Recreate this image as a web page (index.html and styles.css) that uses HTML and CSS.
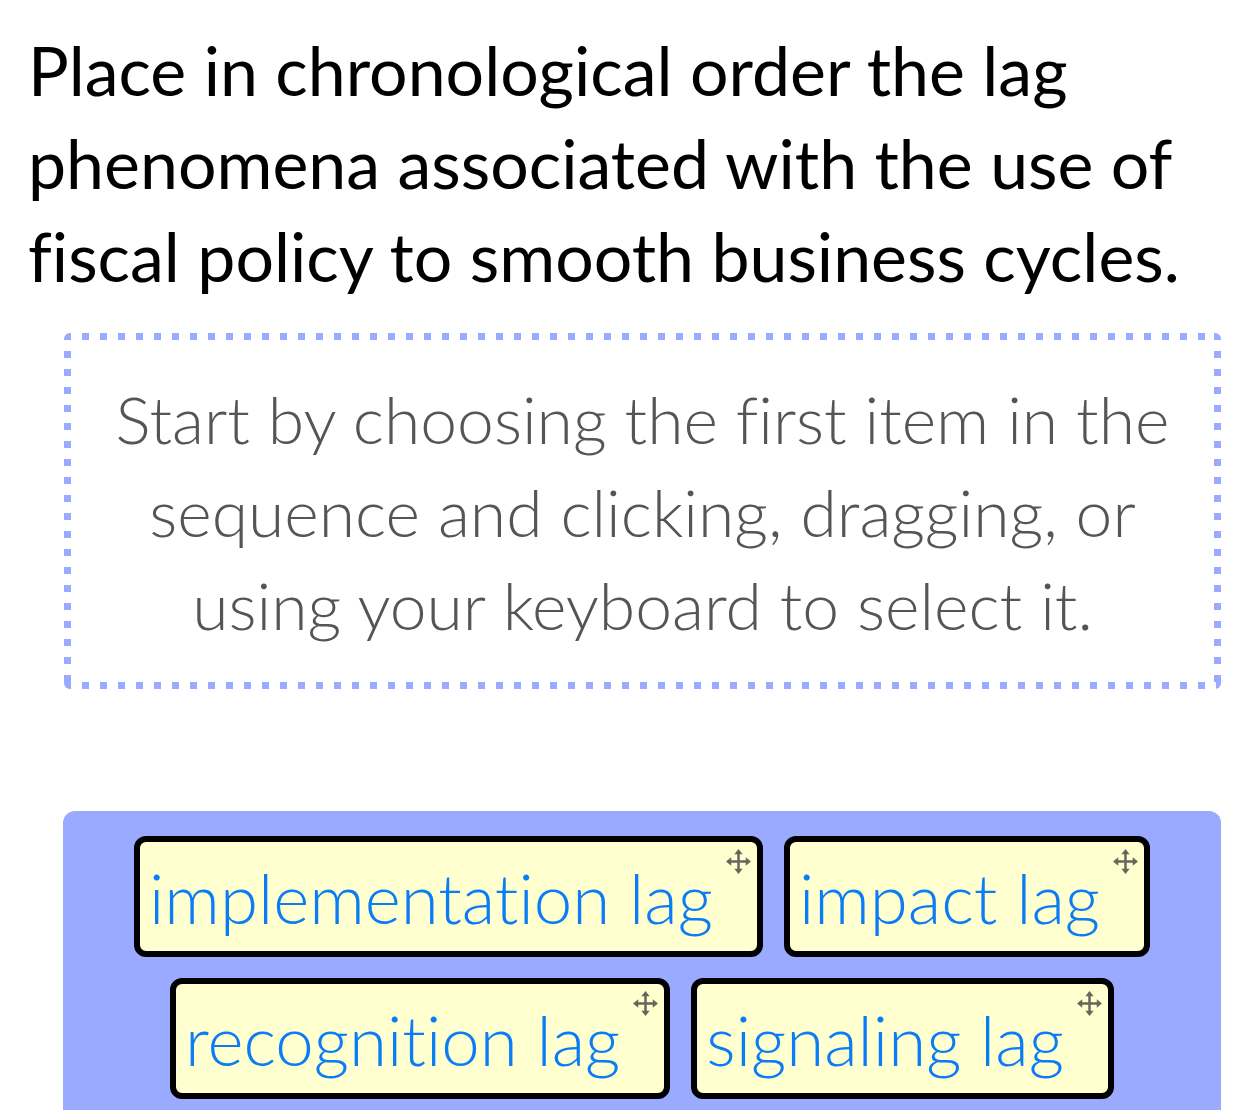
FILE: index.html
```html
<!DOCTYPE html>
<html lang="en">
<head>
    <meta charset="UTF-8">
    <meta name="viewport" content="width=device-width, initial-scale=1.0">
    <title>Sequencing Question</title>
    <link rel="stylesheet" href="styles.css">
</head>
<body>
    <div class="question">
        <p class="prompt">Place in chronological order the lag phenomena associated with the use of fiscal policy to smooth business cycles.</p>

        <div class="drop-zone">
            <p>Start by choosing the first item in the sequence and clicking, dragging, or using your keyboard to select it.</p>
        </div>

        <div class="tray">
            <div class="tile">
                <span class="tile-label">implementation lag</span>
                <svg class="grip" viewBox="0 0 26 26"><path d="M13 1l-4 5h2.8v5.8H6V9l-5 4 5 4v-2.8h5.8V20H9l4 5 4-5h-2.8v-5.8H20V17l5-4-5-4v2.8h-5.8V6H17z"/></svg>
            </div>
            <div class="tile">
                <span class="tile-label">impact lag</span>
                <svg class="grip" viewBox="0 0 26 26"><path d="M13 1l-4 5h2.8v5.8H6V9l-5 4 5 4v-2.8h5.8V20H9l4 5 4-5h-2.8v-5.8H20V17l5-4-5-4v2.8h-5.8V6H17z"/></svg>
            </div>
            <div class="tile">
                <span class="tile-label">recognition lag</span>
                <svg class="grip" viewBox="0 0 26 26"><path d="M13 1l-4 5h2.8v5.8H6V9l-5 4 5 4v-2.8h5.8V20H9l4 5 4-5h-2.8v-5.8H20V17l5-4-5-4v2.8h-5.8V6H17z"/></svg>
            </div>
            <div class="tile">
                <span class="tile-label">signaling lag</span>
                <svg class="grip" viewBox="0 0 26 26"><path d="M13 1l-4 5h2.8v5.8H6V9l-5 4 5 4v-2.8h5.8V20H9l4 5 4-5h-2.8v-5.8H20V17l5-4-5-4v2.8h-5.8V6H17z"/></svg>
            </div>
        </div>
    </div>
</body>
</html>
```

FILE: styles.css
```css
* {
    box-sizing: border-box;
}
body, html {
    margin: 0;
    padding: 0;
    background-color: #ffffff;
    font-family: Lato, "Open Sans", sans-serif;
    font-variant-ligatures: none;
}
.question {
    padding: 23px 28px 0 28px;
}
.prompt {
    margin: 0;
    font-size: 68px;
    line-height: 93px;
    color: #000000;
}
/* square-dot outline, drawn as four repeating strips */
.drop-zone {
    margin: 31px 3px 0 36px;
    height: 356px;
    padding: 7px;
    border-radius: 6px;
    background:
        linear-gradient(to right, #9aabff 7px, transparent 7px) top left / 18px 7px repeat-x,
        linear-gradient(to right, #9aabff 7px, transparent 7px) bottom left / 18px 7px repeat-x,
        linear-gradient(to bottom, #9aabff 7px, transparent 7px) top left / 7px 18px repeat-y,
        linear-gradient(to bottom, #9aabff 7px, transparent 7px) top right / 7px 18px repeat-y;
    display: flex;
    align-items: center;
    justify-content: center;
    text-align: center;
}
.drop-zone p {
    margin: 0;
    padding: 0 34px;
    font-size: 66px;
    line-height: 93px;
    font-weight: 300;
    color: #555555;
}
.tray {
    margin: 122px 3px 0 35px;
    padding: 25px 20px 20px;
    min-height: 300px;
    background-color: #99aaff;
    border-radius: 12px 12px 0 0;
    display: flex;
    flex-wrap: wrap;
    justify-content: center;
    align-content: flex-start;
    gap: 21px;
}
.tile {
    display: flex;
    align-items: flex-start;
    height: 121px;
    padding: 4px 5px 0 9px;
    background-color: #ffffd0;
    border: 6px solid #000000;
    border-radius: 12px;
}
.tile-label {
    font-size: 69px;
    line-height: 100px;
    margin-top: 2px;
    font-weight: 300;
    color: #0a7cf5;
}
.grip {
    width: 27px;
    height: 27px;
    margin: 2px 0 0 12px;
    fill: #66665a;
}
```
